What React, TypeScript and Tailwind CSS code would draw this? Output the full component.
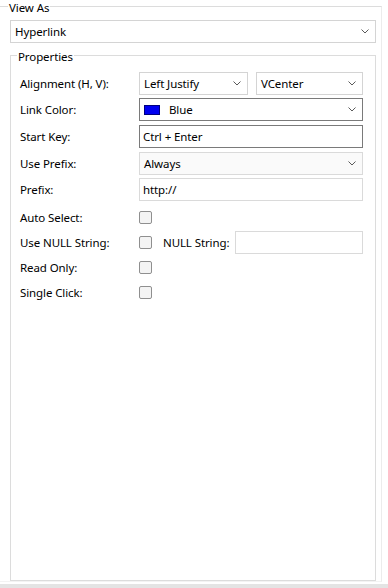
import React from "react";

const font = { fontFamily: '"Segoe UI", "Noto Sans", "Open Sans", sans-serif' };

function Chevron() {
  return (
    <svg width="8" height="5" viewBox="0 0 8 5" className="shrink-0">
      <polyline points="0.5,0.5 4,4 7.5,0.5" fill="none" stroke="#5a5a5a" strokeWidth="1" />
    </svg>
  );
}

function Select({ children, className = "" }: { children: React.ReactNode; className?: string }) {
  return (
    <div className={`h-[23px] flex items-center justify-between pl-[4px] pr-[6px] border ${className}`}>
      <div className="flex items-center">{children}</div>
      <Chevron />
    </div>
  );
}

function Input({ value, className = "" }: { value: string; className?: string }) {
  return (
    <div className={`h-[23px] flex items-center pl-[3px] border bg-white ${className}`}>{value}</div>
  );
}

function Check() {
  return (
    <div className="w-[13px] h-[13px] rounded-[2px] border border-[#8f8f8f] bg-[#f4f4f4]" />
  );
}

function Row({ label, children, className = "" }: { label: string; children: React.ReactNode; className?: string }) {
  return (
    <div className={`flex items-center ${className}`}>
      <div className="w-[119px] shrink-0">{label}</div>
      <div className="flex-1 flex items-center">{children}</div>
    </div>
  );
}

export default function App() {
  return (
    <div className="w-[388px] h-[588px] bg-white flex flex-col text-[11.5px] tracking-[-0.1px] text-black" style={font}>
      <fieldset className="w-[382px] h-[582px] border-t border-r border-b border-l-0 border-t-[#dcdcdc] border-r-[#ececec] border-b-[#f3f3f3] pl-[10px] pr-[5px]">
        <legend className="ml-[-2px] px-[1px] leading-[13px] h-[13px]">
          <span className="relative top-[1px]">View As</span>
        </legend>
        <Select className="mt-[7px] border-[#d4d4d4] bg-white">Hyperlink</Select>
        <fieldset className="mt-[6px] h-[532px] border border-[#dcdcdc] pl-[9px] pr-[12px] pt-[10px]">
          <legend className="ml-[-3px] px-[1px] leading-[13px] h-[13px]">
            <span className="relative top-[1px]">Properties</span>
          </legend>
          <div className="flex flex-col">
            <Row label="Alignment (H, V):" className="h-[23px]">
              <Select className="w-[109px] border-[#d4d4d4] bg-white">Left Justify</Select>
              <Select className="ml-[8px] flex-1 border-[#d4d4d4] bg-white">VCenter</Select>
            </Row>
            <Row label="Link Color:" className="h-[23px] mt-[3px]">
              <Select className="flex-1 border-[#7a7a7a] bg-white">
                <div className="w-[16px] h-[10px] bg-[#0000f0] border border-[#000080] mr-[9px]" />
                Blue
              </Select>
            </Row>
            <Row label="Start Key:" className="h-[23px] mt-[4px]">
              <Input value="Ctrl + Enter" className="flex-1 border-[#7a7a7a]" />
            </Row>
            <Row label="Use Prefix:" className="h-[23px] mt-[4px]">
              <Select className="flex-1 border-[#dadada] bg-[#fafafa]">Always</Select>
            </Row>
            <Row label="Prefix:" className="h-[23px] mt-[3px]">
              <Input value="http://" className="flex-1 border-[#dadada]" />
            </Row>
            <Row label="Auto Select:" className="h-[25px] mt-[4px]">
              <Check />
            </Row>
            <Row label="Use NULL String:" className="h-[25px]">
              <Check />
              <span className="ml-[11px] w-[72px]">NULL String:</span>
              <Input value="" className="flex-1 h-[22px] border-[#dadada]" />
            </Row>
            <Row label="Read Only:" className="h-[25px]">
              <Check />
            </Row>
            <Row label="Single Click:" className="h-[25px]">
              <Check />
            </Row>
          </div>
        </fieldset>
      </fieldset>
      <div className="flex-1 bg-[#e4e4e4] mt-[2px]" />
    </div>
  );
}
